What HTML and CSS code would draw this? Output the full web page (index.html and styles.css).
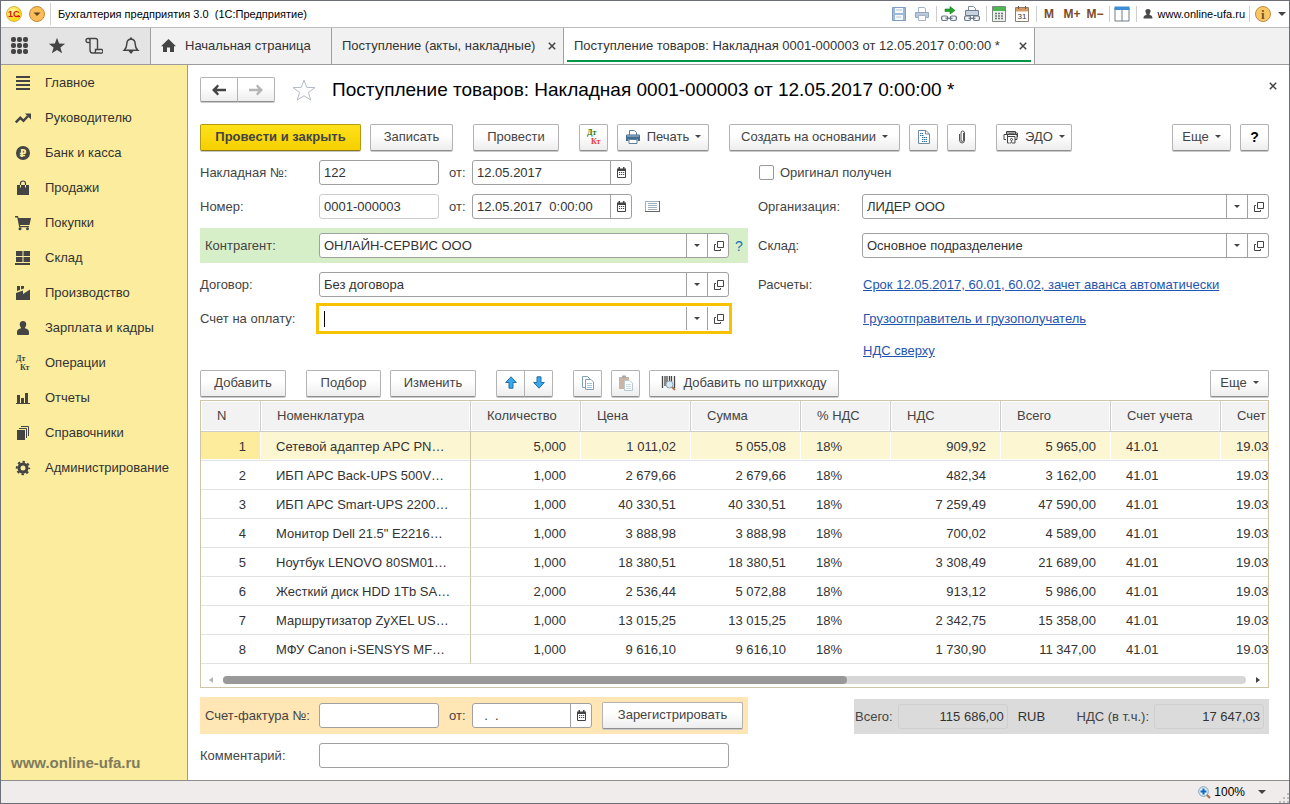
FILE: index.html
```html
<!DOCTYPE html>
<html lang="ru">
<head>
<meta charset="utf-8">
<title>Бухгалтерия предприятия 3.0</title>
<link rel="stylesheet" href="styles.css">
</head>
<body>
<svg class="sprite" aria-hidden="true">
  <symbol id="i-open" viewBox="0 0 11 11"><path d="M4.500 1.500h6v6h-6zM3 4.500H1.500v6h6V9" fill="none" stroke="#444"/></symbol>
  <symbol id="i-cal" viewBox="0 0 11 11"><path d="M1.500 2.500h8v8h-8z" fill="#fff" stroke="#444"/><path d="M1 1.500h9v2.500H1zM2.500 0h1.500v2H2.500zM7 0h1.500v2H7z" fill="#444"/><path d="M3 5.500h1.200m.800 0h1.200m.800 0h1.200M3 7.500h1.200m.800 0h1.200m.800 0h1.200" stroke="#444"/></symbol>
  <symbol id="i-down" viewBox="0 0 6 3"><path d="M0 0h6L3 3z" fill="#444"/></symbol>
  <symbol id="i-x" viewBox="0 0 8 8"><path d="M.8.8l6.400 6.400M7.200.8L.8 7.200" stroke="#444" stroke-width="1.500"/></symbol>
  <symbol id="i-printer" viewBox="0 0 16 16"><path d="M4.500 6V1.500h5l2 2V6" fill="#fff" stroke="#5d7f9b"/><path d="M1 6.500q0-1 1-1h12q1 0 1 1V12h-2.500v-2h-9v2H1z" fill="#426d8f"/><path d="M2 7h12" stroke="#a6c0d3"/><path d="M4 10.500h8v4H4z" fill="#fff" stroke="#5d7f9b"/></symbol>
</svg>
<div class="window">
  <header class="titlebar">
    <svg class="logo" viewBox="0 0 16 16"><defs><radialGradient id="g1" cx=".4" cy=".3"><stop offset="0" stop-color="#fff9a0"/><stop offset="1" stop-color="#ffd91e"/></radialGradient></defs><circle cx="8" cy="8" r="7.500" fill="url(#g1)" stroke="#d9b24a"/><text x="2" y="11" class="logo-text">1С</text><path d="M9 10.500h5" stroke="#d8121b" stroke-width="1.200"/></svg>
    <button class="flat circle" aria-label="Меню"><svg width="16" height="16" viewBox="0 0 16 16"><circle cx="8" cy="8" r="7.500" fill="#fbbd58" stroke="#c08a3a"/><path d="M4.500 6.500h7L8 10z" fill="#5c4320"/></svg></button>
    <i class="sep tall"></i>
    <span class="app-name">Бухгалтерия предприятия 3.0 &nbsp;(1С:Предприятие)</span>
    <div class="tools">
      <button class="flat" aria-label="Сохранить"><svg width="16" height="16" viewBox="0 0 16 16"><path d="M1.500 1.500h13v13h-13z" fill="#9db9d6" stroke="#7e9fc2"/><path d="M4 2h8v5H4zM4 9h8v5H4z" fill="#f4f8fb"/><path d="M5 4h6M5 11h5" stroke="#b8c6d4"/></svg></button>
      <button class="flat" aria-label="Печать"><svg width="16" height="16" viewBox="0 0 16 16"><path d="M4.500 6V1.500h6l1 1.500v3" fill="#fff" stroke="#a3b4c6"/><path d="M1.500 6.500h13v5h-13z" fill="#b9c9da" stroke="#93a8bf"/><path d="M4.500 9.500h7v5h-7z" fill="#fff" stroke="#a3b4c6"/></svg></button>
      <i class="sep"></i>
      <button class="flat" aria-label="Ссылка"><svg width="16" height="16" viewBox="0 0 16 16"><path d="M4 3h5V.5L14 4.500 9 8V5.500H4z" fill="#21a62a" stroke="#137a1c" stroke-width=".6"/><rect x=".6" y="10" width="6" height="4.500" rx="1.500" fill="#f3f3f3" stroke="#687686" stroke-width="1.200"/><rect x="9.400" y="10" width="6" height="4.500" rx="1.500" fill="#f3f3f3" stroke="#687686" stroke-width="1.200"/><path d="M4.500 12.300h7" stroke="#687686" stroke-width="1.200"/></svg></button>
      <button class="flat" aria-label="Печать ссылки"><svg width="16" height="16" viewBox="0 0 16 16"><path d="M4.500 5V.5h5l2 2V5" fill="#fff" stroke="#7e8b99"/><path d="M1.500 4.500h13v5h-13z" fill="#c8d3df" stroke="#6d7c8d"/><rect x=".6" y="10" width="6" height="4.500" rx="1.500" fill="#f3f3f3" stroke="#687686" stroke-width="1.200"/><rect x="9.400" y="10" width="6" height="4.500" rx="1.500" fill="#f3f3f3" stroke="#687686" stroke-width="1.200"/><path d="M4.500 12.300h7" stroke="#687686" stroke-width="1.200"/></svg></button>
      <i class="sep"></i>
      <button class="flat" aria-label="Калькулятор"><svg width="14" height="16" viewBox="0 0 14 16"><path d="M.5.5h13v15H.5z" fill="#eef1ee" stroke="#7d8a80"/><path d="M1 1h12v4H1z" fill="#4db653"/><path d="M3 7.500h8M3 10h8M3 12.500h8" stroke="#6e7478" stroke-width="1.500" stroke-dasharray="2 1"/></svg></button>
      <button class="flat" aria-label="Календарь"><svg width="14" height="16" viewBox="0 0 14 16"><path d="M.5 1.500h13v14H.5z" fill="#fff" stroke="#8d7d70"/><path d="M1 2h12v3.500H1z" fill="#d49a66"/><path d="M3.500 0v3M10.500 0v3" stroke="#7a5a40"/><text x="2.500" y="13" class="cal-text">31</text></svg></button>
      <i class="sep"></i>
      <button class="flat mem">M</button><button class="flat mem">M+</button><button class="flat mem">M−</button>
      <i class="sep"></i>
      <button class="flat" aria-label="Панели"><svg width="16" height="16" viewBox="0 0 16 16"><path d="M1 2h14v13H1zM8 4v11" fill="#fff" stroke="#6f7d8c"/><path d="M.5.5h15V4H.5z" fill="#3c8ed6"/></svg></button>
      <i class="sep"></i>
      <span class="user"><svg width="10" height="10" viewBox="0 0 10 10"><path d="M5 0c4 0 2.500 4 1.200 5.500C8 6.500 9.500 6.500 9.500 9.500h-9c0-3 1.500-3 3.300-4C2.500 4 1 0 5 0z" fill="#4a4a4a"/></svg>www.online-ufa.ru</span>
      <i class="sep"></i>
      <button class="flat" aria-label="Информация"><svg width="16" height="16" viewBox="0 0 16 16"><circle cx="8" cy="8" r="7.500" fill="#fbc765" stroke="#b98d42"/><text x="6" y="12.500" class="info-text">i</text></svg></button>
      <button class="flat small" aria-label="Ещё"><svg width="8" height="4" viewBox="0 0 6 3"><use href="#i-down"/></svg></button>
    </div>
  </header>
  <nav class="tabs">
    <div class="quick">
      <button class="flat" aria-label="Разделы"><svg width="18" height="18" viewBox="0 0 18 18" fill="#444"><rect x="0" y="0" width="5" height="5" rx="2"/><rect x="6" y="0" width="5" height="5" rx="2"/><rect x="12" y="0" width="5" height="5" rx="2"/><rect x="0" y="6" width="5" height="5" rx="2"/><rect x="6" y="6" width="5" height="5" rx="2"/><rect x="12" y="6" width="5" height="5" rx="2"/><rect x="0" y="12" width="5" height="5" rx="2"/><rect x="6" y="12" width="5" height="5" rx="2"/><rect x="12" y="12" width="5" height="5" rx="2"/></svg></button>
      <button class="flat" aria-label="Избранное"><svg width="18" height="18" viewBox="0 0 18 18"><path d="M9 .8l2.100 5.700 6 .2-4.700 3.700 1.700 5.900L9 12.900l-5.100 3.400 1.700-5.900L.9 6.700l6-.2z" fill="#444"/></svg></button>
      <button class="flat" aria-label="История"><svg width="18" height="18" viewBox="0 0 18 18" fill="none" stroke="#444" stroke-width="1.400"><path d="M5 5.500H3a2 2 0 110-4h7.500q2 0 2 2v9M3 1.500q2 0 2 2V13q0 3 2.500 3H15a2 2 0 100-3.500h-4.500v1.700q0 1.800-1.500 1.800"/></svg></button>
      <button class="flat" aria-label="Оповещения"><svg width="18" height="18" viewBox="0 0 18 18"><path d="M9 2C5.800 2.300 4.800 4.500 4.800 7c0 3.500-.8 4.500-2.600 6.300h13.600C14 11.500 13.200 10.500 13.200 7c0-2.500-1-4.700-4.200-5z" fill="none" stroke="#444" stroke-width="1.500"/><path d="M8 .5h2V2H8zM6.500 14h5L9 17z" fill="#444"/></svg></button>
    </div>
    <a class="tab home" href="#"><svg width="15" height="14" viewBox="0 0 15 14"><path d="M7.500 0L15 7.200h-2V13H9V8.500H6V13H2V7.200H0z" fill="#444"/></svg>Начальная страница</a>
    <a class="tab list-tab" href="#">Поступление (акты, накладные)<svg class="x" width="8" height="8"><use href="#i-x"/></svg></a>
    <a class="tab active" href="#">Поступление товаров: Накладная 0001-000003 от 12.05.2017 0:00:00 *<svg class="x" width="8" height="8"><use href="#i-x"/></svg></a>
  </nav>
  <div class="body">
    <aside class="sidebar">
      <nav>
        <a href="#"><svg viewBox="0 0 16 16"><path d="M1 2h14M1 6h14M1 10h14M1 14h14" stroke="#444" stroke-width="2"/></svg>Главное</a>
        <a href="#"><svg viewBox="0 0 16 16"><path d="M.8 12.500l4.500-4.700 3.200 3L13 6" fill="none" stroke="#444" stroke-width="2.400"/><path d="M10 3.500h6v6z" fill="#444"/></svg>Руководителю</a>
        <a href="#"><svg viewBox="0 0 16 16"><circle cx="8" cy="8" r="7" fill="#444"/><text x="4.500" y="12" class="rub-text">₽</text></svg>Банк и касса</a>
        <a href="#"><svg viewBox="0 0 16 16"><path d="M2 5h12v10H2z" fill="#444"/><path d="M5.500 7V3.500q0-2.500 2.500-2.500t2.500 2.500V7" fill="none" stroke="#444" stroke-width="1.200"/><path d="M5.500 5v2.500M10.500 5v2.500" stroke="#fbec9e"/></svg>Продажи</a>
        <a href="#"><svg viewBox="0 0 16 16"><path d="M0 1h3l.6 2H16l-1.500 7H5l.3 1H14v1.200H4.200L2.300 2.500H0z" fill="#444"/><circle cx="5" cy="13.800" r="1.500" fill="#444"/><circle cx="12.500" cy="13.800" r="1.500" fill="#444"/></svg>Покупки</a>
        <a href="#"><svg viewBox="0 0 16 16"><path d="M1 1h6.500v5H1zM8.500 1H15v5H8.500zM1 7h6.500v5H1zM8.500 7H15v5H8.500zM0 13h15v2H0z" fill="#444"/></svg>Склад</a>
        <a href="#"><svg viewBox="0 0 16 16"><path d="M1 8l7-2.500V9l7-4.500V15H1zM2 1h3v4L2 6zM6 1h3v2.500L6 4.500z" fill="#444"/></svg>Производство</a>
        <a href="#"><svg viewBox="0 0 16 16"><path d="M8 1c4.500 0 3.500 5.500 1.700 7 2.300 1.300 4.300 1 4.300 4.500V14q0 1-1 1H3q-1 0-1-1v-1.500C2 9 4 9.300 6.300 8 4.500 6.500 3.500 1 8 1z" fill="#444"/></svg>Зарплата и кадры</a>
        <a href="#"><svg viewBox="0 0 16 16"><text x="1" y="6" class="dk-text">Дт</text><text x="5" y="15" class="dk-text">Кт</text></svg>Операции</a>
        <a href="#"><svg viewBox="0 0 16 16"><path d="M2 5h3v8H2zM6 8h3v5H6zM10 3h3v10h-3zM1 13h14v1H1z" fill="#444"/></svg>Отчеты</a>
        <a href="#"><svg viewBox="0 0 16 16"><path d="M2 5h8v10H2z" fill="#444"/><path d="M4 3.500h7.500V13M6 1.500h7.500V11" fill="none" stroke="#444"/></svg>Справочники</a>
        <a href="#"><svg viewBox="0 0 16 16"><circle cx="8" cy="8" r="4" fill="none" stroke="#444" stroke-width="3"/><circle cx="8" cy="8" r="6.200" fill="none" stroke="#444" stroke-width="2" stroke-dasharray="2.435 2.435" stroke-dashoffset="1.200"/></svg>Администрирование</a>
      </nav>
      <span class="site">www.online-ufa.ru</span>
    </aside>
    <main>
      <div class="heading">
        <div class="pair nav">
          <button class="btn" aria-label="Назад"><svg width="14" height="12" viewBox="0 0 14 12"><path d="M0 6l5.500-5.500L7 2 4.800 4.700H14v2.600H4.800L7 10l-1.500 1.500z" fill="#444"/></svg></button><button class="btn" aria-label="Вперед"><svg width="14" height="12" viewBox="0 0 14 12"><path d="M14 6L8.500.5 7 2l2.200 2.700H0v2.600h9.200L7 10l1.500 1.500z" fill="#b5b5b5"/></svg></button>
        </div>
        <button class="flat" aria-label="В избранное"><svg width="24" height="22" viewBox="0 0 24 22"><path d="M12 1.200l2.800 7.200 8 .2-6.300 4.900 2.200 7.500-6.700-4.300L5.300 21l2.200-7.500L1.200 8.600l8-.2z" fill="#fff" stroke="#b4bac2"/></svg></button>
        <h1>Поступление товаров: Накладная 0001-000003 от 12.05.2017 0:00:00 *</h1>
        <button class="flat close" aria-label="Закрыть"><svg width="8" height="8"><use href="#i-x"/></svg></button>
      </div>
      <div class="commands">
        <div class="group"><button class="btn primary">Провести и закрыть</button><button class="btn w83">Записать</button></div>
        <button class="btn w86">Провести</button>
        <div class="group"><button class="btn sq" aria-label="Дт Кт"><svg width="16" height="16" viewBox="0 0 16 16"><text x="1" y="6" class="dk-text dt">Дт</text><text x="5" y="15" class="dk-text kt">Кт</text></svg></button><button class="btn w92"><svg width="16" height="16"><use href="#i-printer"/></svg>Печать<svg width="6" height="3"><use href="#i-down"/></svg></button></div>
        <div class="group"><button class="btn w171">Создать на основании<svg width="6" height="3"><use href="#i-down"/></svg></button>
          <button class="btn sq" aria-label="Документ"><svg width="14" height="16" viewBox="0 0 14 16"><path d="M1.500 1.500H9L12.500 5v9.500h-11z" fill="#fff" stroke="#6d8ba3"/><path d="M8.500 1.500V5h4" fill="none" stroke="#6d8ba3"/><path d="M3 4.500h3M3 6.500h4M5 8.500h5M5 10.500h5M5 12.500h5" stroke="#31739c" stroke-dasharray="1.500 .5"/></svg></button>
          <button class="btn sq" aria-label="Вложения"><svg width="8" height="16" viewBox="0 0 8 16"><path d="M5.500 4v7q0 1.500-1.200 1.500T3 11V4q0-2 1.700-2T6.500 4v7q0 3-2.400 3T1.500 11V5" fill="none" stroke="#555"/></svg></button></div>
        <button class="btn w76"><svg width="16" height="16" viewBox="0 0 16 16"><path d="M3.500 5V2.500h9V5M1 5.500h13v5h-2M3 10.500H1v-5M4.500 5V14h2M5 7.500h7V14h-2M3 4h11.500v4M6 5h5" fill="none" stroke="#444"/><circle cx="8.500" cy="10.500" r="1" fill="none" stroke="#444"/><path d="M7.500 14.500l1-2 1 2" stroke="#444" fill="none"/></svg>ЭДО<svg width="6" height="3"><use href="#i-down"/></svg></button>
        <div class="group end"><button class="btn w59">Еще<svg width="6" height="3"><use href="#i-down"/></svg></button><button class="btn sq help">?</button></div>
      </div>
      <div class="form">
        <div class="col">
          <div class="row"><label class="lb" for="f1">Накладная №:</label><input class="box w120" id="f1" value="122"><label class="ot" for="f2">от:</label><span class="box combo w160"><input id="f2" value="12.05.2017"><button aria-label="Выбрать дату"><svg width="11" height="11"><use href="#i-cal"/></svg></button></span></div>
          <div class="row"><label class="lb" for="f3">Номер:</label><input class="box w120 soft" id="f3" value="0001-000003"><label class="ot" for="f4">от:</label><span class="box combo w160"><input id="f4" value="12.05.2017  0:00:00"><button aria-label="Выбрать дату"><svg width="11" height="11"><use href="#i-cal"/></svg></button></span><svg class="list" width="15" height="11" viewBox="0 0 15 11"><path d="M.5.5h14v10H.5z" fill="#fff" stroke="#9db0bd"/><path d="M14.500 0v11M0 10.500h15" stroke="#666"/><path d="M3 2.500h9M3 4.500h9M3 6.500h9M3 8.500h9" stroke="#9db0bd"/></svg></div>
          <div class="row party"><label class="lb" for="f5">Контрагент:</label><span class="box combo w410"><input id="f5" value="ОНЛАЙН-СЕРВИС ООО"><button aria-label="Список"><svg width="6" height="3"><use href="#i-down"/></svg></button><button aria-label="Открыть"><svg width="11" height="11"><use href="#i-open"/></svg></button></span><a class="q" href="#">?</a></div>
          <div class="row"><label class="lb" for="f6">Договор:</label><span class="box combo w410"><input id="f6" value="Без договора"><button aria-label="Список"><svg width="6" height="3"><use href="#i-down"/></svg></button><button aria-label="Открыть"><svg width="11" height="11"><use href="#i-open"/></svg></button></span></div>
          <div class="row"><label class="lb" for="f7">Счет на оплату:</label><span class="box combo w410 focused"><i class="caret"></i><input id="f7"><button aria-label="Список"><svg width="6" height="3"><use href="#i-down"/></svg></button><button aria-label="Открыть"><svg width="11" height="11"><use href="#i-open"/></svg></button></span></div>
        </div>
        <div class="col">
          <div class="row"><label class="check"><input type="checkbox">Оригинал получен</label></div>
          <div class="row"><label class="lb" for="g1f">Организация:</label><span class="box combo grow"><input id="g1f" value="ЛИДЕР ООО"><button aria-label="Список"><svg width="6" height="3"><use href="#i-down"/></svg></button><button aria-label="Открыть"><svg width="11" height="11"><use href="#i-open"/></svg></button></span></div>
          <div class="row store"><label class="lb" for="g2f">Склад:</label><span class="box combo grow"><input id="g2f" value="Основное подразделение"><button aria-label="Список"><svg width="6" height="3"><use href="#i-down"/></svg></button><button aria-label="Открыть"><svg width="11" height="11"><use href="#i-open"/></svg></button></span></div>
          <div class="row"><span class="lb">Расчеты:</span><a class="link" href="#">Срок 12.05.2017, 60.01, 60.02, зачет аванса автоматически</a></div>
          <div class="row"><span class="lb"></span><a class="link" href="#">Грузоотправитель и грузополучатель</a></div>
          <div class="row low"><span class="lb"></span><a class="link" href="#">НДС сверху</a></div>
        </div>
      </div>
      <div class="commands table-tools">
        <button class="btn w86">Добавить</button>
        <div class="group"><button class="btn w75">Подбор</button><button class="btn w86">Изменить</button></div>
        <div class="pair"><button class="btn" aria-label="Вверх"><svg width="12" height="13" viewBox="0 0 12 13"><path d="M6 .8l5.300 5.700H8v5.700H4V6.500H.7z" fill="#35aaf0" stroke="#2b6f9d"/></svg></button><button class="btn" aria-label="Вниз"><svg width="12" height="13" viewBox="0 0 12 13"><path d="M6 12.200l5.300-5.700H8V.8H4v5.700H.7z" fill="#35aaf0" stroke="#2b6f9d"/></svg></button></div>
        <div class="group"><button class="btn sq" aria-label="Копировать"><svg width="14" height="16" viewBox="0 0 14 16"><path d="M1.500 1.500h5L9 4v8.500H1.500z" fill="#fff" stroke="#7fa0b8"/><path d="M4.500 4.500H10L12.500 7v7.500h-8z" fill="#fff" stroke="#7fa0b8"/><path d="M6 8.500h5M6 10.500h5M6 12.500h5" stroke="#a3c4dc"/></svg></button>
          <button class="btn sq" aria-label="Вставить"><svg width="16" height="16" viewBox="0 0 16 16"><path d="M1 2h10v12H1z" fill="#c9b5a5"/><path d="M4 .5h4V3H4z" fill="#a8a8a8"/><path d="M6.500 5.500h5L14.500 8v7.500h-8z" fill="#fff" stroke="#b9c9d4"/><path d="M8 9.500h5M8 11.500h5M8 13.500h5" stroke="#cbdbe6"/></svg></button>
          <button class="btn w190"><svg width="16" height="16" viewBox="0 0 16 16"><path d="M1.500 1v12M4 1v10M6 1v8M8.500 1v6M10.500 1v6M13.500 1v12" stroke="#444" stroke-width="1.300"/><circle cx="8.500" cy="9.500" r="3.500" fill="#d5e9f7" stroke="#89a5bb"/><path d="M11 12l3 3" stroke="#b0764f" stroke-width="2"/></svg>Добавить по штрихкоду</button></div>
        <div class="group end"><button class="btn w59">Еще<svg width="6" height="3"><use href="#i-down"/></svg></button></div>
      </div>
      <div class="grid">
        <table>
          <colgroup><col class="c60"><col class="c210"><col class="c110"><col class="c110"><col class="c110"><col class="c90"><col class="c110"><col class="c110"><col class="c110"><col class="c110"></colgroup>
          <thead><tr><th>N</th><th>Номенклатура</th><th>Количество</th><th>Цена</th><th>Сумма</th><th>% НДС</th><th>НДС</th><th>Всего</th><th>Счет учета</th><th>Счет</th></tr></thead>
          <tbody>
            <tr class="sel"><td>1</td><td>Сетевой адаптер APC PN…</td><td>5,000</td><td>1 011,02</td><td>5 055,08</td><td>18%</td><td>909,92</td><td>5 965,00</td><td>41.01</td><td>19.03</td></tr>
            <tr><td>2</td><td>ИБП APC Back-UPS 500V…</td><td>1,000</td><td>2 679,66</td><td>2 679,66</td><td>18%</td><td>482,34</td><td>3 162,00</td><td>41.01</td><td>19.03</td></tr>
            <tr><td>3</td><td>ИБП APC Smart-UPS 2200…</td><td>1,000</td><td>40 330,51</td><td>40 330,51</td><td>18%</td><td>7 259,49</td><td>47 590,00</td><td>41.01</td><td>19.03</td></tr>
            <tr><td>4</td><td>Монитор Dell 21.5" E2216…</td><td>1,000</td><td>3 888,98</td><td>3 888,98</td><td>18%</td><td>700,02</td><td>4 589,00</td><td>41.01</td><td>19.03</td></tr>
            <tr><td>5</td><td>Ноутбук LENOVO 80SM01…</td><td>1,000</td><td>18 380,51</td><td>18 380,51</td><td>18%</td><td>3 308,49</td><td>21 689,00</td><td>41.01</td><td>19.03</td></tr>
            <tr><td>6</td><td>Жесткий диск HDD 1Tb SA…</td><td>2,000</td><td>2 536,44</td><td>5 072,88</td><td>18%</td><td>913,12</td><td>5 986,00</td><td>41.01</td><td>19.03</td></tr>
            <tr><td>7</td><td>Маршрутизатор ZyXEL US…</td><td>1,000</td><td>13 015,25</td><td>13 015,25</td><td>18%</td><td>2 342,75</td><td>15 358,00</td><td>41.01</td><td>19.03</td></tr>
            <tr><td>8</td><td>МФУ Canon i-SENSYS MF…</td><td>1,000</td><td>9 616,10</td><td>9 616,10</td><td>18%</td><td>1 730,90</td><td>11 347,00</td><td>41.01</td><td>19.03</td></tr>
          </tbody>
        </table>
        <div class="scroll"><svg width="4" height="6"><path d="M4 0v6L0 3z" fill="#b5b5b5"/></svg><div class="track"><div class="thumb"></div></div><svg width="4" height="6"><path d="M0 0v6l4-3z" fill="#444"/></svg></div>
      </div>
      <div class="bottom">
        <div class="invoice"><label class="lb" for="h1">Счет-фактура №:</label><input class="box w120" id="h1"><label class="ot" for="h2">от:</label><span class="box combo w120"><input id="h2" value="  .  ."><button aria-label="Выбрать дату"><svg width="11" height="11"><use href="#i-cal"/></svg></button></span><button class="btn w141">Зарегистрировать</button></div>
        <div class="totals"><label for="t1">Всего:</label><input class="box total" id="t1" value="115 686,00" readonly><span class="rub">RUB</span><label for="t2">НДС (в т.ч.):</label><input class="box total" id="t2" value="17 647,03" readonly></div>
      </div>
      <div class="comment"><label class="lb" for="k1">Комментарий:</label><input class="box w410" id="k1"></div>
    </main>
  </div>
  <footer class="status">
    <svg width="13" height="13" viewBox="0 0 13 13"><path d="M8.500 8.500l3.500 3.500" stroke="#b0703f" stroke-width="2.200"/><circle cx="5.500" cy="5.500" r="4.800" fill="#dff0fb" stroke="#7f9db5"/><path d="M5.500 2.500v6M2.500 5.500h6" stroke="#1264c4" stroke-width="2"/></svg>
    <span>100%</span>
    <button class="flat small" aria-label="Масштаб"><svg width="8" height="4" viewBox="0 0 6 3"><use href="#i-down"/></svg></button>
    <svg class="grip" width="10" height="10" viewBox="0 0 10 10"><path d="M8 0h2v2H8zM4 4h2v2H4zM8 4h2v2H8zM0 8h2v2H0zM4 8h2v2H4zM8 8h2v2H8z" fill="#c2bcbc"/></svg>
  </footer>
</div>
</body>
</html>
```
FILE: styles.css
```css
* { box-sizing: border-box; }
body { margin: 0; font: 13px/16px "Liberation Sans", Arial, sans-serif; color: #333; }
input, button { font: inherit; color: inherit; margin: 0; }
a { color: inherit; text-decoration: none; }
svg { flex: none; display: block; }
.sprite { position: absolute; width: 0; height: 0; }
.window { min-height: 100vh; display: flex; flex-direction: column; border: 1px solid #6c6e78; background: #fff; }
.flat { border: 0; background: none; padding: 0; display: flex; align-items: center; justify-content: center; }

.titlebar { display: flex; align-items: center; height: 27px; padding-left: 5px; border-bottom: 1px solid #bdbdbd; font-size: 11px; color: #000; }
.logo { width: 16px; height: 16px; }
.logo-text { font: bold 9px "Liberation Sans", sans-serif; fill: #d8121b; }
.circle { margin: 0 5px 0 7px; }
.sep { width: 1px; height: 16px; margin: 0 1px 0 2px; background: #cfcfcf; }
.tall { height: 22px; margin: 0; }
.app-name { margin-left: 7px; }
.tools { margin-left: auto; display: flex; align-items: center; }
.tools .flat { width: 23px; height: 22px; }
.tools .small { width: 14px; margin-left: 1px; }
.tools .mem { font-weight: bold; font-size: 12px; color: #7c4a26; }
.user { display: flex; align-items: center; gap: 5px; padding: 0 2px 0 5px; }
.cal-text { font: 8px "Liberation Sans", sans-serif; fill: #333; }
.info-text { font: bold 13px "Liberation Serif", serif; fill: #6d5426; }

.tabs { display: flex; height: 37px; background: #f1f1f1; border-bottom: 1px solid #9b9b9b; }
.quick { display: flex; width: 150px; background: #e4e4e4; border-right: 1px solid #a0a0a0; }
.quick .flat { width: 37px; }
.tab { display: flex; align-items: center; gap: 9px; padding: 0 7px 0 10px; border-right: 1px solid #a0a0a0; white-space: nowrap; }
.home { min-width: 181px; }
.list-tab { min-width: 232px; }
.x { margin-left: auto; }
.active { min-width: 471px; background: #fff; position: relative; }
.active::after { content: ""; position: absolute; left: 3px; right: 3px; bottom: 2px; height: 2px; background: #009646; }

.body { flex: 1; display: flex; }
.sidebar { width: 187px; flex: none; display: flex; flex-direction: column; justify-content: space-between; background: #fbec9e; border-right: 1px solid #b9a51c; }
.sidebar nav a { display: flex; align-items: center; gap: 14px; height: 35px; padding-left: 14px; }
.sidebar nav svg { width: 16px; height: 16px; }
.rub-text { font: bold 10px "DejaVu Sans", sans-serif; fill: #fbec9e; }
.dk-text { font: bold 8px "Liberation Serif", serif; fill: #444; }
.dt { fill: #1c7a12; }
.kt { fill: #ee3a3a; }
.site { padding: 0 10px 9px; font-weight: bold; font-size: 15px; color: #7f7b5c; }

main { flex: 1; min-width: 0; padding: 12px 20px 12px 12px; color: #444; }
.heading { display: flex; align-items: center; margin-right: -8px; }
.heading > .flat { margin: 0 16px 0 17px; }
.heading > .close { margin: 0 0 8px auto; }
h1 { margin: 0; font-size: 19px; line-height: 25px; font-weight: normal; color: #000; }
.btn { display: inline-flex; align-items: center; justify-content: center; gap: 6px; height: 27px; padding: 0 4px 2px; white-space: nowrap; border: 1px solid #b3b3b3; border-bottom-color: #8f8f8f; border-radius: 2px; background: linear-gradient(#fff 40%, #ededed); box-shadow: 0 1px 0 #c9c9c9; color: #444; }
.primary { width: 161px; font-weight: bold; background: linear-gradient(#ffe11b, #f5d000); border-color: #b39a10; border-bottom-color: #8e7a0c; }
.pair { display: flex; }
.pair .btn { width: 29px; border-radius: 2px 0 0 2px; }
.pair .btn + .btn { border-radius: 0 2px 2px 0; margin-left: -1px; }
.nav .btn { width: 38px; height: 25px; padding-bottom: 0; }
.commands { display: flex; gap: 20px; margin-top: 22px; }
.group { display: flex; gap: 9px; }
.end { margin-left: auto; }
.sq { width: 29px; }
.help { font-weight: bold; font-size: 14px; color: #000; }
.w59 { width: 59px; } .w75 { width: 75px; } .w76 { width: 76px; } .w83 { width: 83px; } .w86 { width: 86px; } .w92 { width: 92px; }
.w141 { width: 141px; } .w171 { width: 171px; } .w190 { width: 190px; }

.form { display: grid; grid-template-columns: 548px 1fr; gap: 10px; margin-top: 9px; }
.col { display: flex; flex-direction: column; gap: 9px; }
.row { display: flex; align-items: center; min-height: 25px; }
.low { min-height: 22px; }
.lb { width: 119px; flex: none; }
.col + .col .lb { width: 104px; }
.party { background: #d7efc9; padding: 5px 0 5px 5px; }
.party .lb, .invoice .lb { width: 114px; }
.store { padding: 5px 0; }
.box { height: 25px; padding: 0 4px; border: 1px solid #a0a0a0; border-radius: 3px; background: #fff; color: #333; outline: 0; }
.soft { border-color: #ccc; }
.w120 { width: 120px; } .w160 { width: 160px; } .w410 { width: 410px; }
.grow { flex: 1; }
.ot { width: 33px; padding-left: 10px; }
.combo { display: flex; padding: 0; position: relative; }
.combo input { flex: 1; min-width: 0; border: 0; padding: 0 4px; background: none; outline: 0; white-space: pre; }
.combo button { width: 21px; padding: 0; border: 0; border-left: 1px solid #a0a0a0; background: none; display: flex; align-items: center; justify-content: center; }
.focused { border-color: #fff; border-radius: 0; box-shadow: 0 0 0 3px #f8c200; }
.caret { position: absolute; left: 4px; top: 4px; width: 1px; height: 16px; background: #000; }
.list { margin-left: 13px; }
.q { margin-left: 6px; font-size: 14px; color: #1a73b0; }
.check { display: flex; align-items: center; gap: 6px; }
.check input { appearance: none; width: 15px; height: 15px; margin: 0 0 0 1px; border: 1px solid #999; border-radius: 2px; background: #fff; }
.link { color: #1f54b0; text-decoration: underline; padding-left: 1px; }

.table-tools { margin-top: 8px; }
.grid { margin-top: 3px; border: 1px solid #cfc6a8; overflow: hidden; }
table { width: 1130px; table-layout: fixed; border-collapse: separate; border-spacing: 0; color: #333; }
.c60 { width: 60px; } .c90 { width: 90px; } .c110 { width: 110px; } .c210 { width: 210px; }
th { height: 31px; padding: 0 0 0 16px; text-align: left; font-weight: normal; color: #444; background: #f2f2f2; border-right: 1px solid #ccc; border-bottom: 1px solid #ccc; box-shadow: inset 0 0 0 1px #fff; }
td { height: 29px; padding: 1px 15px 0; text-align: right; white-space: nowrap; border-bottom: 1px solid #e2e2e2; }
td:nth-child(2), td:nth-child(6), td:nth-child(9), td:nth-child(10) { text-align: left; }
td:nth-child(2) { border-right: 1px solid #cfc6a8; }
td:nth-child(2), th { overflow: hidden; white-space: nowrap; }
.sel td { background: #fdf6d3; border-right: 1px solid #fff; box-shadow: inset 0 -1px #fff; padding-right: 14px; }
.sel td:first-child { background: #fcec9c; }
.sel td:nth-child(2) { border-right-color: #cfc6a8; }
.scroll { display: flex; align-items: flex-start; gap: 10px; height: 23px; padding: 12px 8px 0; }
.scroll svg { margin-top: 1px; }
.track { flex: 1; height: 8px; border-radius: 4px; background: #d6d6d6; }
.thumb { width: 61%; height: 8px; border-radius: 4px; background: #999; }
.bottom { display: flex; justify-content: space-between; align-items: flex-end; margin-top: 9px; }
.invoice { display: flex; align-items: center; width: 548px; height: 37px; padding-left: 5px; background: #ffe6b4; }
.invoice .btn { margin-left: 10px; }
.totals { display: flex; align-items: center; width: 415px; height: 35px; padding-right: 5px; background: #dbdbdb; }
.total { width: 110px; margin-left: 5px; padding: 0 3px; text-align: right; background: none; border-color: #cfcfcf; }
.totals label:first-child { padding-left: 1px; }
.rub { margin: 0 auto 0 10px; color: #333; }
.comment { display: flex; align-items: center; margin-top: 9px; }
.status { display: flex; align-items: center; justify-content: flex-end; height: 23px; gap: 3px; border-top: 1px solid #8e8e8e; background: #f0ecec; font-size: 12px; color: #000; }
.status .small { width: 28px; }
.grip { align-self: flex-end; }
```
